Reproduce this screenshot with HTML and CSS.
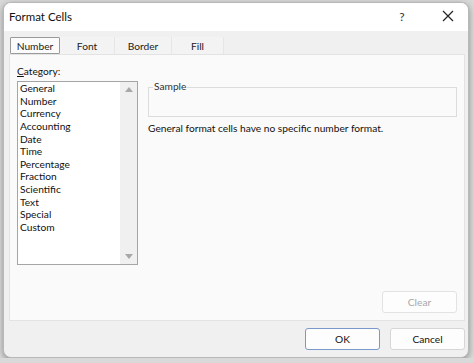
FILE: index.html
```html
<!doctype html>
<html lang="en-us">
  <head>
    <meta charset="utf-8">
    <title>Format Cells</title>
    <link rel="stylesheet" href="styles.css">
  </head>
  <body>
    <div class="dialog">
      <div class="titlebar">
        <span class="title">Format Cells</span>
        <span class="help">?</span>
        <span class="close">
          <svg width="12" height="12" viewBox="0 0 12 12"><path d="M1 1 L11 11 M11 1 L1 11" stroke="#222" stroke-width="1.2" fill="none"/></svg>
        </span>
      </div>
      <div class="main">
        <div class="tabs">
          <span class="tab active">Number</span>
          <span class="tab">Font</span>
          <span class="tab">Border</span>
          <span class="tab">Fill</span>
        </div>
        <div class="panel">
          <div class="cols">
            <div class="left">
              <div class="label"><u>C</u>ategory:</div>
              <div class="listbox">
                <ul class="items">
                  <li>General</li>
                  <li>Number</li>
                  <li>Currency</li>
                  <li>Accounting</li>
                  <li>Date</li>
                  <li>Time</li>
                  <li>Percentage</li>
                  <li>Fraction</li>
                  <li>Scientific</li>
                  <li>Text</li>
                  <li>Special</li>
                  <li>Custom</li>
                </ul>
                <div class="scroll">
                  <span class="arrow up"></span>
                  <span class="arrow down"></span>
                </div>
              </div>
            </div>
            <div class="right">
              <div class="sample"><span class="legend">Sample</span></div>
              <p class="desc">General format cells have no specific number format.</p>
            </div>
          </div>
          <div class="panel-foot">
            <button class="btn" disabled>Clear</button>
          </div>
        </div>
      </div>
      <div class="footer">
        <button class="btn default">OK</button>
        <button class="btn">Cancel</button>
      </div>
    </div>
  </body>
</html>
```

FILE: styles.css
```css
* { box-sizing: border-box; }
body { margin: 0; background: #d9d9d9; font-family: Lato, "Noto Sans", sans-serif; font-size: 10.2px; color: #111; }
.dialog { width: 466px; height: 356px; margin: 2px 0 0 3px; background: #f0f0f0; border-radius: 8px; border: 1px solid #b8b8b8; box-shadow: 0 2px 6px rgba(0,0,0,0.35); display: flex; flex-direction: column; overflow: hidden; }

.titlebar { height: 28px; background: #fff; display: flex; align-items: center; padding: 0 0 2px 5px; }
.title { font-size: 11.5px; flex: 1; }
.help { font-size: 12px; color: #333; width: 40px; text-align: center; margin-right: 6px; }
.close { width: 40px; display: flex; justify-content: center; }

.main { padding: 6px 3px 0 5px; display: flex; flex-direction: column; flex: 1; }
.tabs { display: flex; height: 17px; align-items: stretch; padding-left: 1px; }
.tab { display: flex; align-items: center; justify-content: center; border-right: 1px solid #e6e6e6; background: #f3f3f3; color: #222; }
.tab:nth-child(2) { width: 55px; }
.tab:nth-child(3) { width: 57px; }
.tab:nth-child(4) { width: 52px; }
.tab.active { width: 50px; background: #fbfbfb; border: 1px solid #9a9a9a; border-radius: 1px; }

.panel { flex: 1; background: #fafafa; border: 1px solid #e3e3e3; padding: 10px 7px 7px 7px; display: flex; flex-direction: column; }
.cols { display: flex; flex: 1; gap: 10px; }
.left { width: 121px; }
.label { height: 16px; }
.listbox { height: 184px; background: #fff; border: 1px solid #a5a5a5; display: flex; }
.items { list-style: none; margin: 0; padding: 0 0 0 2px; flex: 1; }
.items li { height: 12.65px; line-height: 12.65px; }
.scroll { width: 17px; background: #f0f0f0; display: flex; flex-direction: column; justify-content: space-between; align-items: center; padding: 5px 0; }
.arrow { width: 0; height: 0; border-left: 4px solid transparent; border-right: 4px solid transparent; }
.arrow.up { border-bottom: 5px solid #a8a8a8; }
.arrow.down { border-top: 5px solid #a8a8a8; }

.right { flex: 1; padding-top: 22px; }
.sample { position: relative; height: 30px; border: 1px solid #dcdcdc; }
.legend { position: absolute; top: -8px; left: 4px; background: #fafafa; padding: 0 1px; color: #333; }
.desc { margin: 5px 0 0 0; }

.panel-foot { display: flex; justify-content: flex-end; }
.btn { font-family: inherit; font-size: 10.2px; width: 75px; height: 22px; background: #fdfdfd; border: 1px solid #d6d6d6; border-radius: 3px; color: #111; padding: 0; }
.btn:disabled { color: #a8a8a8; border-color: #e2e2e2; }
.btn.default { border: 1px solid #7a98c9; }

.footer { height: 36px; display: flex; justify-content: flex-end; align-items: center; gap: 10px; padding: 0 3px 0 0; }
```
